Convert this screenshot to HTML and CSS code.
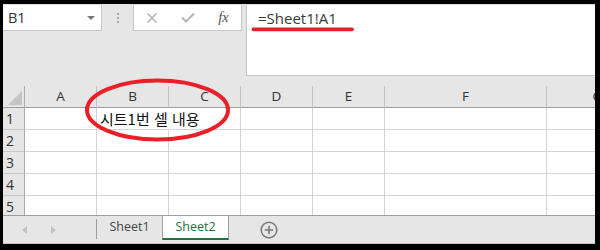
FILE: index.html
```html
<!DOCTYPE html>
<html lang="ko">
<head>
<meta charset="utf-8">
<link rel="stylesheet" href="styles.css">
</head>
<body>
<div class="app">
  <div class="topbar">
    <div class="tools">
      <div class="namebox"><span class="name">B1</span><span class="caret"></span></div>
      <div class="grip"><i></i><i></i><i></i></div>
      <div class="fbtns">
        <span class="fbtn">
          <svg width="12" height="12" viewBox="0 0 12 12"><path d="M1.5 1.5 L10.5 10.5 M10.5 1.5 L1.5 10.5" stroke="#b4b4b4" stroke-width="1.6" fill="none"/></svg>
        </span>
        <span class="fbtn">
          <svg width="14" height="11" viewBox="0 0 14 11"><path d="M1 5.5 L5 9.5 L13 1.5" stroke="#b4b4b4" stroke-width="2" fill="none"/></svg>
        </span>
        <span class="fbtn fx">fx</span>
      </div>
    </div>
    <div class="formula"><span class="ftext">=Sheet1!A1</span></div>
  </div>

  <div class="sheet">
    <div class="corner"><span class="tri"></span></div>
    <div class="colh">A</div><div class="colh">B</div><div class="colh">C</div><div class="colh">D</div><div class="colh">E</div><div class="colh">F</div><div class="colh">G</div>

    <div class="rowh">1</div>
    <div class="cell"></div><div class="cell ovf">시트1번 셀 내용</div><div class="cell"></div><div class="cell"></div><div class="cell"></div><div class="cell"></div><div class="cell"></div>

    <div class="rowh">2</div>
    <div class="cell"></div><div class="cell"></div><div class="cell"></div><div class="cell"></div><div class="cell"></div><div class="cell"></div><div class="cell"></div>

    <div class="rowh">3</div>
    <div class="cell"></div><div class="cell"></div><div class="cell"></div><div class="cell"></div><div class="cell"></div><div class="cell"></div><div class="cell"></div>

    <div class="rowh">4</div>
    <div class="cell"></div><div class="cell"></div><div class="cell"></div><div class="cell"></div><div class="cell"></div><div class="cell"></div><div class="cell"></div>

    <div class="rowh">5</div>
    <div class="cell"></div><div class="cell"></div><div class="cell"></div><div class="cell"></div><div class="cell"></div><div class="cell"></div><div class="cell"></div>
  </div>

  <div class="tabbar">
    <div class="nav">
      <span class="arrow left"></span>
      <span class="arrow right"></span>
    </div>
    <span class="vsep"></span>
    <div class="tab">Sheet1</div>
    <div class="tab active">Sheet2</div>
    <div class="addbtn">
      <svg width="18" height="18" viewBox="0 0 18 18"><circle cx="9" cy="9" r="7.8" stroke="#7a7a7a" stroke-width="1.5" fill="none"/><path d="M9 4.8 V13.2 M4.8 9 H13.2" stroke="#7a7a7a" stroke-width="1.6"/></svg>
    </div>
  </div>

  <svg class="marks" width="592" height="240" viewBox="0 0 592 240">
    <ellipse cx="154.5" cy="106" rx="70.5" ry="29.5" stroke="#ea1f28" stroke-width="4" fill="none"/>
    <line x1="250.5" y1="25.3" x2="349" y2="25.3" stroke="#ea1f28" stroke-width="3.8" stroke-linecap="round"/>
  </svg>
</div>
</body>
</html>
```

FILE: styles.css
```css
* { box-sizing: border-box; }

html, body {
  margin: 0;
  padding: 0;
  background: #000;
}

.app {
  position: relative;
  width: 592px;
  height: 240px;
  margin: 4px 5px 6px 3px;
  background: #e6e6e6;
  display: flex;
  flex-direction: column;
  overflow: hidden;
  font-family: "Open Sans", "Noto Sans", "Liberation Sans", sans-serif;
  color: #333;
}

/* ---------- top bar ---------- */
.topbar {
  height: 72px;
  display: flex;
  flex: none;
}

.tools {
  width: 243px;
  height: 27px;
  display: flex;
  flex: none;
}

.namebox {
  width: 99px;
  height: 27px;
  background: #fff;
  border-top: 1px solid #dcdcdc;
  border-right: 1px solid #c6c6c6;
  border-bottom: 1px solid #c6c6c6;
  display: flex;
  align-items: center;
  padding-left: 5px;
}

.name {
  font-size: 14.5px;
  color: #333;
  line-height: 20px;
}

.caret {
  margin-left: auto;
  margin-right: 6px;
  margin-top: 1px;
  width: 0;
  height: 0;
  border-left: 4px solid transparent;
  border-right: 4px solid transparent;
  border-top: 4px solid #777;
}

.grip {
  width: 31px;
  display: flex;
  flex-direction: column;
  align-items: center;
  justify-content: center;
  gap: 2px;
  padding-top: 1px;
}

.grip i {
  display: block;
  width: 2px;
  height: 2px;
  background: #a9a9a9;
}

.fbtns {
  width: 109px;
  height: 27px;
  background: #fff;
  border: 1px solid #c6c6c6;
  border-top-color: #dcdcdc;
  display: flex;
  align-items: center;
}

.fbtn {
  width: 36px;
  height: 25px;
  display: flex;
  align-items: center;
  justify-content: center;
}

.fx {
  font-family: "Liberation Serif", "DejaVu Serif", serif;
  font-style: italic;
  font-size: 15px;
  color: #555;
  letter-spacing: -0.5px;
}

.formula {
  flex: 1;
  background: #fff;
  border-left: 1px solid #c6c6c6;
  border-top: 1px solid #dcdcdc;
  border-bottom: 1px solid #c6c6c6;
  padding: 2px 0 0 11px;
}

.ftext {
  font-size: 15px;
  line-height: 20px;
  color: #3a3a3a;
}

/* ---------- grid ---------- */
.sheet {
  margin-top: 10px;
  height: 129px;
  flex: none;
  overflow: hidden;
  background: #fff;
  display: grid;
  grid-template-columns: 22px 72px 72px 72px 72px 72px 162px 102px;
  grid-auto-rows: 22px;
}

.corner {
  position: relative;
  background: #e6e6e6;
  border-right: 1px solid #ababab;
  border-bottom: 1px solid #9e9e9e;
}

.tri {
  position: absolute;
  right: 2px;
  bottom: 2px;
  width: 0;
  height: 0;
  border-left: 14px solid transparent;
  border-bottom: 14px solid #c4c4c4;
}

.colh {
  background: #e6e6e6;
  border-right: 1px solid #c4c4c4;
  border-bottom: 1px solid #9e9e9e;
  font-size: 13.5px;
  line-height: 21px;
  text-align: center;
  color: #333;
}

.rowh {
  background: #e6e6e6;
  border-right: 1px solid #ababab;
  border-bottom: 1px solid #c8c8c8;
  font-size: 14px;
  line-height: 21px;
  padding-left: 3px;
  color: #333;
}

.cell {
  border-right: 1px solid #d4d4d4;
  border-bottom: 1px solid #d4d4d4;
}

.cell.ovf {
  border-right-color: transparent;
  overflow: visible;
  white-space: nowrap;
  padding-left: 3px;
  font-family: "Noto Sans CJK KR", "Noto Sans", sans-serif;
  font-size: 15px;
  line-height: 21px;
  color: #111;
}

/* ---------- tab bar ---------- */
.tabbar {
  height: 29px;
  flex: none;
  border-top: 1px solid #9e9e9e;
  border-bottom: 1px solid #c6c6c6;
  display: flex;
  align-items: flex-start;
}

.nav {
  width: 93px;
  height: 27px;
  display: flex;
  align-items: center;
  padding-left: 19px;
  gap: 24px;
}

.arrow {
  width: 0;
  height: 0;
  border-top: 4px solid transparent;
  border-bottom: 4px solid transparent;
}

.arrow.left { border-right: 5px solid #c2c2c2; }
.arrow.right { border-left: 5px solid #c2c2c2; }

.vsep {
  width: 1px;
  height: 20px;
  margin-top: 3px;
  background: #9e9e9e;
}

.tab {
  width: 65px;
  height: 24px;
  font-size: 12.5px;
  line-height: 22px;
  text-align: center;
  color: #444;
}

.tab.active {
  width: 67px;
  background: #fff;
  border-left: 1px solid #9e9e9e;
  border-right: 1px solid #9e9e9e;
  border-bottom: 2px solid #217346;
  color: #217346;
}

.addbtn {
  margin-left: 31px;
  height: 27px;
  display: flex;
  align-items: center;
}

.marks {
  position: absolute;
  left: 0;
  top: 0;
  pointer-events: none;
}
```
